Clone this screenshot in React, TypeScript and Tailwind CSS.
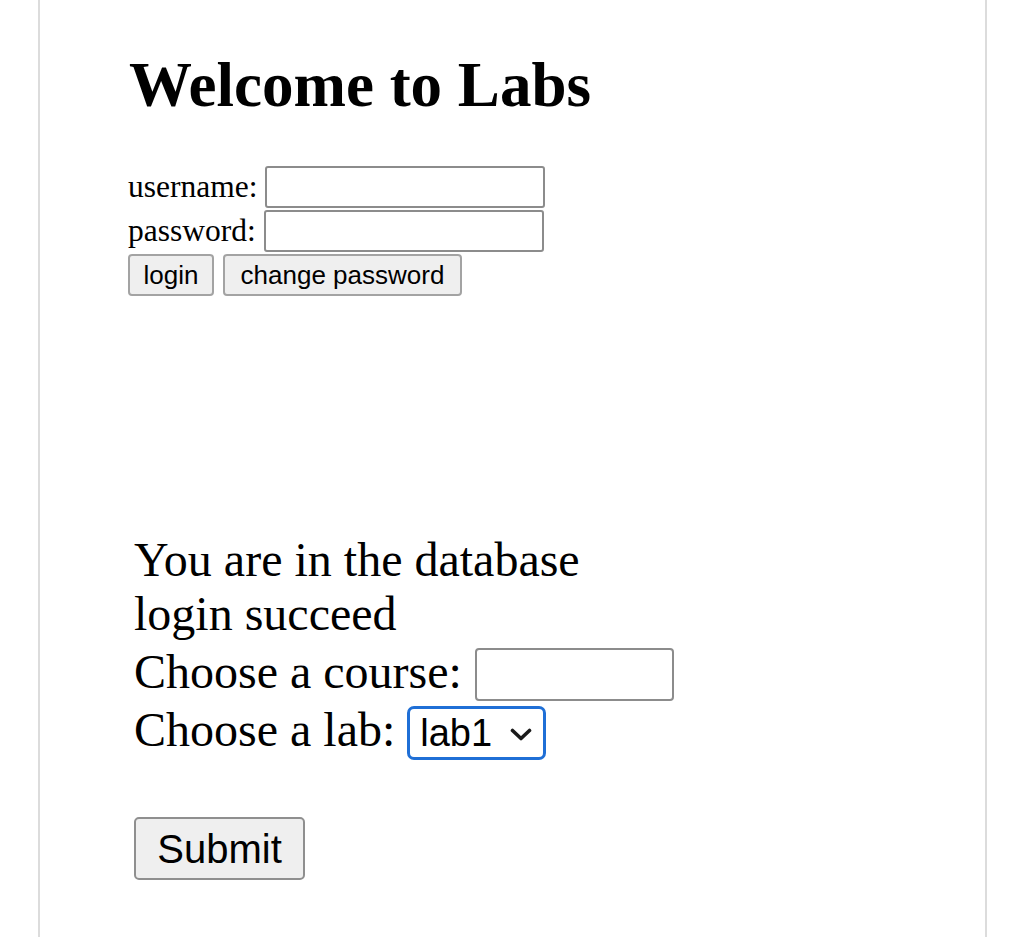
import { useState } from 'react';

const serif = "font-['Liberation_Serif','Times_New_Roman',serif]";
const sans = "font-['Liberation_Sans',Arial,sans-serif]";

function SmallButton({ label, width }: { label: string; width: string }) {
  return (
    <button
      type="button"
      className={`${sans} ${width} h-[42px] rounded-[4px] border-2 border-[#a3a3a3] bg-[#efefef] text-[26px] leading-none text-black`}
    >
      {label}
    </button>
  );
}

export default function App() {
  const [lab, setLab] = useState('lab1');

  return (
    <div className="min-h-[937px] bg-white">
      <div className="ml-[38px] min-h-[937px] w-[949px] border-x-2 border-[#dcdcdc] pl-[88px]">
        {/* login form */}
        <h1 className={`${serif} ml-[1px] pt-[54px] text-[63px] font-bold leading-[63px] text-black`}>
          Welcome to Labs
        </h1>

        <div className={`${serif} mt-[49px] flex flex-col gap-[2px] text-[31.5px] text-black`}>
          <div className="flex items-center gap-[8px]">
            <span className="leading-[42px]">username:</span>
            <input className="h-[42px] w-[280px] rounded-[3px] border-2 border-[#8c8c8c] bg-white" />
          </div>
          <div className="flex items-center gap-[8px]">
            <span className="leading-[42px]">password:</span>
            <input
              type="password"
              className="h-[42px] w-[280px] rounded-[3px] border-2 border-[#8c8c8c] bg-white"
            />
          </div>
          <div className="flex gap-[9px]">
            <SmallButton label="login" width="w-[86px]" />
            <SmallButton label="change password" width="w-[239px]" />
          </div>
        </div>

        {/* after login */}
        <div className={`${serif} ml-[6px] mt-[237px] text-[48px] text-black`}>
          <div className="h-[54px] leading-[54px]">You are in the database</div>
          <div className="h-[54px] leading-[54px]">login succeed</div>
          <div className="flex items-start">
            <span className="pt-[4px] leading-[54px]">Choose a course:</span>
            <input className="ml-[13px] mt-[7px] h-[53px] w-[199px] rounded-[4px] border-2 border-[#8c8c8c] bg-white" />
          </div>
          <div className="flex items-start">
            <span className="pt-[2px] leading-[54px]">Choose a lab:</span>
            <div className="relative ml-[12px] mt-[5px]">
              <select
                value={lab}
                onChange={(e) => setLab(e.target.value)}
                className={`${sans} block h-[54px] w-[139px] appearance-none rounded-[7px] border-[3px] border-[#1f6fd6] bg-white pl-[10px] text-[38px] leading-none text-black outline-none`}
              >
                <option value="lab1">lab1</option>
                <option value="lab2">lab2</option>
                <option value="lab3">lab3</option>
              </select>
              <svg
                className="pointer-events-none absolute left-[103px] top-[22px] h-[13px] w-[22px]"
                viewBox="0 0 22 13"
                fill="none"
                stroke="#1a1a1a"
                strokeWidth={3.6}
                strokeLinecap="round"
                strokeLinejoin="round"
              >
                <path d="M2.5 2.5l8.5 8 8.5-8" />
              </svg>
            </div>
          </div>
          <button
            type="submit"
            className={`${sans} mt-[57px] h-[63px] w-[171px] rounded-[5px] border-2 border-[#8f8f8f] bg-[#efefef] text-[40px] leading-none text-black`}
          >
            Submit
          </button>
        </div>
      </div>
    </div>
  );
}
